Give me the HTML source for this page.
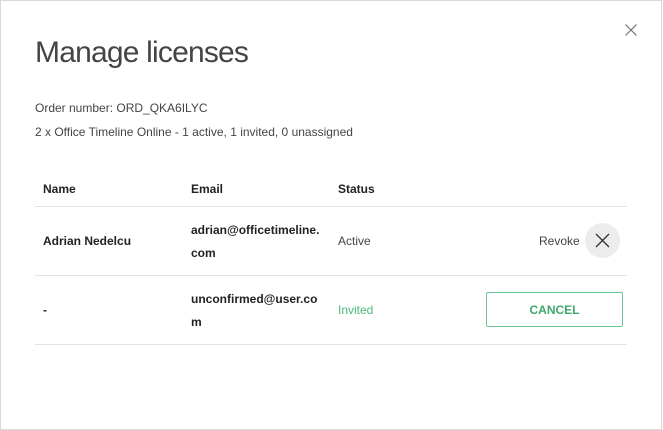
<!DOCTYPE html>
<html><head><meta charset="utf-8"><style>
html,body{margin:0;padding:0;background:#fff;}
body{width:663px;height:430px;position:relative;overflow:hidden;font-family:"Liberation Sans",sans-serif;color:#333;}
.frame{position:absolute;left:0;top:0;width:660px;height:428px;border:1px solid #d9d9d9;}
.a{position:absolute;white-space:nowrap;}
.b{font-weight:bold;font-size:12px;color:#222;}
.t{font-size:12px;color:#444;}
.line{position:absolute;left:35px;width:592px;height:1px;background:#e3e3e3;}
</style></head><body>
<div class="frame"></div>
<svg class="a" style="left:624px;top:23px" width="14" height="14" viewBox="0 0 14 14"><path d="M1.5 1.5L12.5 12.5M12.5 1.5L1.5 12.5" stroke="#777" stroke-width="1.2"/></svg>
<div class="a" style="left:35px;top:36px;font-size:30px;color:#444;letter-spacing:-0.8px;">Manage licenses</div>
<div class="a t" style="left:35px;top:101px;">Order number: ORD_QKA6ILYC</div>
<div class="a t" style="left:35px;top:125px;">2 x Office Timeline Online - 1 active, 1 invited, 0 unassigned</div>
<div class="a b" style="left:43px;top:182px;">Name</div>
<div class="a b" style="left:191px;top:182px;">Email</div>
<div class="a b" style="left:338px;top:182px;">Status</div>
<div class="line" style="top:206px"></div>
<div class="a b" style="left:43px;top:234px;">Adrian Nedelcu</div>
<div class="a b" style="left:191px;top:223px;">adrian@officetimeline.</div>
<div class="a b" style="left:191px;top:246px;">com</div>
<div class="a t" style="left:338px;top:234px;">Active</div>
<div class="a t" style="left:539px;top:234px;">Revoke</div>
<div class="a" style="left:585px;top:223px;width:35px;height:35px;border-radius:50%;background:#ececec;"></div>
<svg class="a" style="left:595px;top:233px" width="15" height="15" viewBox="0 0 15 15"><path d="M1 1L14 14M14 1L1 14" stroke="#333" stroke-width="1.3"/></svg>
<div class="line" style="top:275px"></div>
<div class="a b" style="left:43px;top:303px;">-</div>
<div class="a b" style="left:191px;top:292px;">unconfirmed@user.co</div>
<div class="a b" style="left:191px;top:315px;">m</div>
<div class="a t" style="left:338px;top:303px;color:#4cb879;">Invited</div>
<div class="a" style="left:486px;top:292px;width:135px;height:33px;border:1px solid #6cc796;border-radius:2px;text-align:center;line-height:34px;font-size:12px;font-weight:bold;color:#3ea86c;">CANCEL</div>
<div class="line" style="top:344px"></div>
</body></html>
